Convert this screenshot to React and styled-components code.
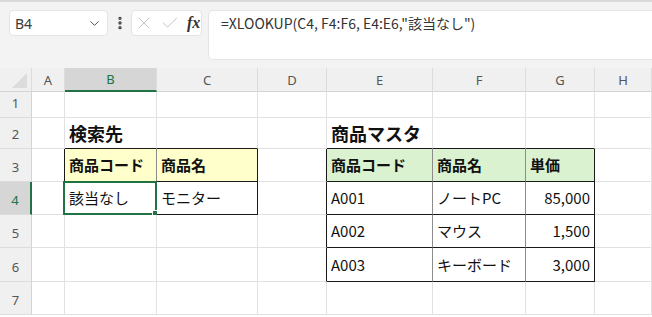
import React from "react";
import styled, { createGlobalStyle } from "styled-components";
import { ChevronDown, X, Check, EllipsisVertical } from "lucide-react";

const GlobalStyle = createGlobalStyle`
  html, body {
    margin: 0;
    padding: 0;
    background: #ffffff;
    overflow: hidden;
  }
  body {
    font-family: "Noto Sans CJK JP", "Noto Sans", sans-serif;
  }
`;

const GREEN = "#217346";
const GRID = "#e1e1e1";
const INNER = "#8c8c8c";
const BLACK = "#1a1a1a";

const COLS = ["A", "B", "C", "D", "E", "F", "G", "H"];
const COL_WIDTHS = [32, 33, 92, 101, 69, 106, 93, 69];
const ROW_HEIGHTS = [24, 26, 31, 33, 33, 33, 34, 33];

const cells = {
  B2: { text: "検索先", title: true },
  E2: { text: "商品マスタ", title: true },
  B3: { text: "商品コード", bold: true, fill: "#ffffcc" },
  C3: { text: "商品名", bold: true, fill: "#ffffcc" },
  B4: { text: "該当なし" },
  C4: { text: "モニター" },
  E3: { text: "商品コード", bold: true, fill: "#daf2d0" },
  F3: { text: "商品名", bold: true, fill: "#daf2d0" },
  G3: { text: "単価", bold: true, fill: "#daf2d0" },
  E4: { text: "A001" },
  F4: { text: "ノートPC" },
  G4: { text: "85,000", right: true },
  E5: { text: "A002" },
  F5: { text: "マウス" },
  G5: { text: "1,500", right: true },
  E6: { text: "A003" },
  F6: { text: "キーボード" },
  G6: { text: "3,000", right: true },
};

const tables = [
  { c1: 1, c2: 2, r1: 3, r2: 4 },
  { c1: 4, c2: 6, r1: 3, r2: 6 },
];

const inTable = (t, c, r) => c >= t.c1 && c <= t.c2 && r >= t.r1 && r <= t.r2;

const rightColor = (c, r) => {
  for (const t of tables) {
    if (r < t.r1 || r > t.r2) continue;
    if (c === t.c2 || c === t.c1 - 1) return BLACK;
    if (c >= t.c1 && c < t.c2) return INNER;
  }
  return GRID;
};

const bottomColor = (c, r) => {
  for (const t of tables) {
    if (c < t.c1 || c > t.c2) continue;
    if (inTable(t, c, r) || r === t.r1 - 1) return BLACK;
  }
  return GRID;
};

const Page = styled.div`
  width: 652px;
  height: 317px;
  display: flex;
  flex-direction: column;
  background: #ffffff;
`;

const TopBar = styled.div`
  height: 68px;
  box-sizing: border-box;
  background: #f3f3f3;
  border-top: 2px solid #dadada;
  display: flex;
  align-items: flex-start;
  padding: 8px 0 0 9px;
`;

const NameBox = styled.div`
  width: 99px;
  height: 26px;
  box-sizing: border-box;
  background: #ffffff;
  border: 1px solid #e4e4e4;
  border-radius: 4px;
  display: flex;
  align-items: center;
  justify-content: space-between;
  padding: 0 5px;
  font-family: "Noto Sans", sans-serif;
  font-size: 14px;
  color: #3a3a3a;
`;

const Dots = styled.div`
  width: 23px;
  height: 26px;
  display: flex;
  align-items: center;
  justify-content: center;
  color: #444;
`;

const FxBox = styled.div`
  width: 71px;
  height: 26px;
  box-sizing: border-box;
  background: #ffffff;
  border: 1px solid #e4e4e4;
  border-radius: 4px;
  display: flex;
  align-items: center;
  padding: 0 0 0 2px;
  gap: 6px;
  color: #c4c4c4;
`;

const Fx = styled.span`
  font-family: "Liberation Serif", serif;
  font-style: italic;
  font-weight: bold;
  font-size: 16px;
  color: #333;
  margin-left: 1px;
`;

const FormulaBar = styled.div`
  flex: 1;
  margin-left: 6px;
  height: 50px;
  box-sizing: border-box;
  background: #ffffff;
  border: 1px solid #e4e4e4;
  border-right: none;
  border-radius: 5px 0 0 5px;
  padding: 2px 0 0 12px;
  font-family: "Noto Sans CJK JP", sans-serif;
  font-size: 14px;
  color: #333;
  white-space: nowrap;
`;

const Grid = styled.div`
  flex: 1;
  display: grid;
  grid-template-columns: ${COL_WIDTHS.map((w) => w + "px").join(" ")} 1fr;
  grid-template-rows: ${ROW_HEIGHTS.map((h) => h + "px").join(" ")} 1fr;
`;

const Corner = styled.div`
  background: #f0f0f0;
  border-right: 1px solid #dcdcdc;
  border-bottom: 1px solid #d4d4d4;
  box-sizing: border-box;
  position: relative;
  &::after {
    content: "";
    position: absolute;
    right: 4px;
    bottom: 3px;
    width: 0;
    height: 0;
    border-left: 15px solid transparent;
    border-bottom: 15px solid #dcdcdc;
  }
`;

const ColHead = styled.div`
  box-sizing: border-box;
  background: ${(p) => (p.$active ? "#d6d6d6" : "#f0f0f0")};
  border-right: 1px solid #dcdcdc;
  border-bottom: ${(p) => (p.$active ? `2px solid ${GREEN}` : "1px solid #d4d4d4")};
  display: flex;
  align-items: center;
  justify-content: center;
  font-family: "Noto Sans", sans-serif;
  font-size: 13px;
  color: ${(p) => (p.$active ? GREEN : "#555")};
`;

const RowHead = styled.div`
  box-sizing: border-box;
  background: ${(p) => (p.$active ? "#d6d6d6" : "#f0f0f0")};
  border-right: ${(p) => (p.$active ? `2px solid ${GREEN}` : "1px solid #d4d4d4")};
  border-bottom: 1px solid #dcdcdc;
  display: flex;
  align-items: flex-end;
  justify-content: center;
  padding-bottom: 5px;
  font-family: "Noto Sans", sans-serif;
  font-size: 13px;
  color: ${(p) => (p.$active ? GREEN : "#555")};
`;

const Cell = styled.div`
  position: relative;
  box-sizing: border-box;
  background: ${(p) => p.$fill || "#ffffff"};
  border-right: 1px solid ${(p) => p.$right};
  border-bottom: 1px solid ${(p) => p.$bottom};
  display: flex;
  align-items: flex-end;
  justify-content: ${(p) => (p.$alignRight ? "flex-end" : "flex-start")};
  padding: 0 4px ${(p) => (p.$title ? "3px" : "7px")} 4px;
  font-family: "Noto Sans CJK JP", sans-serif;
  font-size: ${(p) => (p.$title ? "18px" : "15px")};
  font-weight: ${(p) => (p.$bold || p.$title ? 700 : 400)};
  color: #111;
  line-height: 1.2;
  white-space: nowrap;
`;

const Selection = styled.div`
  position: absolute;
  left: -2px;
  top: -1px;
  right: -1px;
  bottom: -1px;
  border: 2px solid ${GREEN};
  pointer-events: none;
  &::after {
    content: "";
    position: absolute;
    right: -5px;
    bottom: -5px;
    width: 6px;
    height: 6px;
    background: ${GREEN};
    border: 1px solid #ffffff;
  }
`;

export default function App() {
  const rows = ROW_HEIGHTS.length;
  const items = [];
  items.push(<Corner key="corner" />);
  COLS.forEach((c) => {
    items.push(
      <ColHead key={"h" + c} $active={c === "B"}>
        {c}
      </ColHead>
    );
  });
  for (let r = 1; r < rows; r++) {
    items.push(
      <RowHead key={"r" + r} $active={r === 4}>
        {r}
      </RowHead>
    );
    COLS.forEach((c, ci) => {
      const addr = c + r;
      const d = cells[addr] || {};
      items.push(
        <Cell
          key={addr}
          $fill={d.fill}
          $bold={d.bold}
          $title={d.title}
          $alignRight={d.right}
          $right={rightColor(ci, r)}
          $bottom={bottomColor(ci, r)}
        >
          {d.text}
          {addr === "B4" && <Selection />}
        </Cell>
      );
    });
  }

  return (
    <>
      <GlobalStyle />
      <Page>
        <TopBar>
          <NameBox>
            <span>B4</span>
            <ChevronDown size={15} strokeWidth={1.6} color="#555" />
          </NameBox>
          <Dots>
            <EllipsisVertical size={16} strokeWidth={3} />
          </Dots>
          <FxBox>
            <X size={20} strokeWidth={1.2} />
            <Check size={20} strokeWidth={1.2} />
            <Fx>fx</Fx>
          </FxBox>
          <FormulaBar>=XLOOKUP(C4, F4:F6, E4:E6,"該当なし")</FormulaBar>
        </TopBar>
        <Grid>{items}</Grid>
      </Page>
    </>
  );
}
